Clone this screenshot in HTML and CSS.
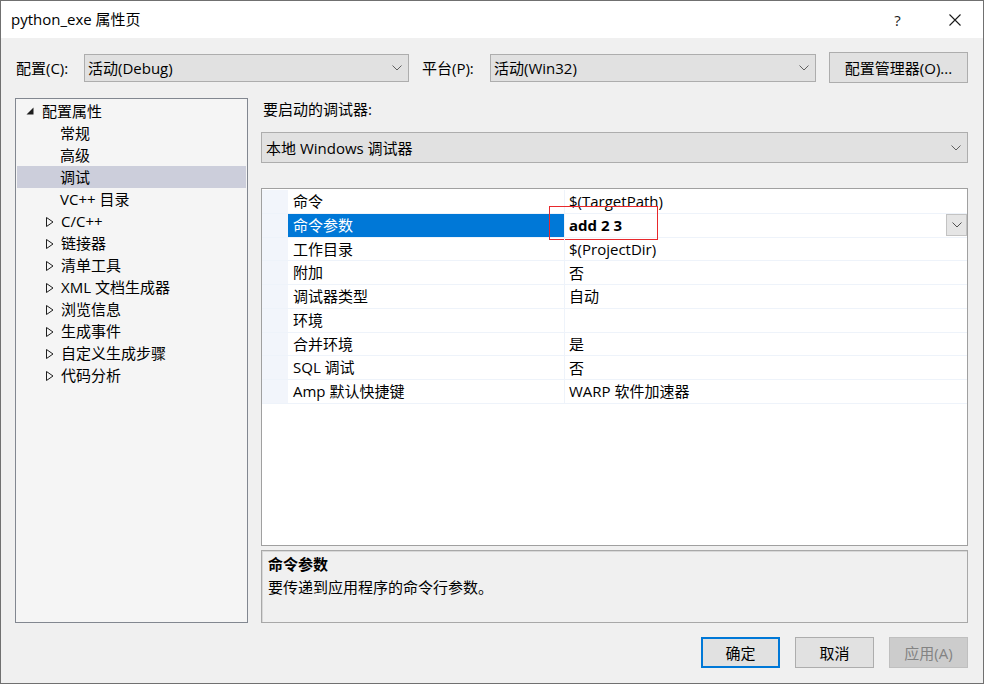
FILE: index.html
```html
<!DOCTYPE html>
<html lang="zh-CN">
<head>
    <meta charset="UTF-8">
    <title>python_exe 属性页</title>
    <link rel="stylesheet" href="styles.css">
</head>
<body>
<div class="dialog">
    <div class="titlebar">
        <span class="title">python_exe 属性页</span>
        <span class="title-btn">?</span>
        <span class="title-btn">
            <svg width="12" height="12" viewBox="0 0 12 12"><path d="M0.5 0.5 L11.5 11.5 M11.5 0.5 L0.5 11.5" stroke="#1a1a1a" stroke-width="1.1" fill="none"/></svg>
        </span>
    </div>

    <div class="content">
        <div class="config-row">
            <span class="label label-config">配置(C):</span>
            <div class="combo combo-config">
                <span>活动(Debug)</span>
                <svg class="chev" width="10" height="6" viewBox="0 0 10 6"><path d="M0.5 0.5 L5 5 L9.5 0.5" stroke="#606060" fill="none"/></svg>
            </div>
            <span class="label label-platform">平台(P):</span>
            <div class="combo combo-platform">
                <span>活动(Win32)</span>
                <svg class="chev" width="10" height="6" viewBox="0 0 10 6"><path d="M0.5 0.5 L5 5 L9.5 0.5" stroke="#606060" fill="none"/></svg>
            </div>
            <div class="btn btn-manager">配置管理器(O)...</div>
        </div>

        <div class="main">
            <div class="tree">
                <div class="tree-item root">
                    <svg class="tri" width="8" height="8" viewBox="0 0 8 8"><path d="M7.5 0.5 L7.5 7.5 L0.5 7.5 Z" fill="#1e1e1e"/></svg>
                    <span>配置属性</span>
                </div>
                <div class="tree-item leaf">常规</div>
                <div class="tree-item leaf">高级</div>
                <div class="tree-item leaf selected">调试</div>
                <div class="tree-item leaf">VC++ 目录</div>
                <div class="tree-item branch"><svg class="tri-open" width="8" height="10" viewBox="0 0 8 10"><path d="M0.5 0.5 L7 5 L0.5 9.5 Z" stroke="#1e1e1e" fill="none"/></svg><span>C/C++</span></div>
                <div class="tree-item branch"><svg class="tri-open" width="8" height="10" viewBox="0 0 8 10"><path d="M0.5 0.5 L7 5 L0.5 9.5 Z" stroke="#1e1e1e" fill="none"/></svg><span>链接器</span></div>
                <div class="tree-item branch"><svg class="tri-open" width="8" height="10" viewBox="0 0 8 10"><path d="M0.5 0.5 L7 5 L0.5 9.5 Z" stroke="#1e1e1e" fill="none"/></svg><span>清单工具</span></div>
                <div class="tree-item branch"><svg class="tri-open" width="8" height="10" viewBox="0 0 8 10"><path d="M0.5 0.5 L7 5 L0.5 9.5 Z" stroke="#1e1e1e" fill="none"/></svg><span>XML 文档生成器</span></div>
                <div class="tree-item branch"><svg class="tri-open" width="8" height="10" viewBox="0 0 8 10"><path d="M0.5 0.5 L7 5 L0.5 9.5 Z" stroke="#1e1e1e" fill="none"/></svg><span>浏览信息</span></div>
                <div class="tree-item branch"><svg class="tri-open" width="8" height="10" viewBox="0 0 8 10"><path d="M0.5 0.5 L7 5 L0.5 9.5 Z" stroke="#1e1e1e" fill="none"/></svg><span>生成事件</span></div>
                <div class="tree-item branch"><svg class="tri-open" width="8" height="10" viewBox="0 0 8 10"><path d="M0.5 0.5 L7 5 L0.5 9.5 Z" stroke="#1e1e1e" fill="none"/></svg><span>自定义生成步骤</span></div>
                <div class="tree-item branch"><svg class="tri-open" width="8" height="10" viewBox="0 0 8 10"><path d="M0.5 0.5 L7 5 L0.5 9.5 Z" stroke="#1e1e1e" fill="none"/></svg><span>代码分析</span></div>
            </div>

            <div class="right">
                <div class="debugger-label">要启动的调试器:</div>
                <div class="combo combo-debugger">
                    <span>本地 Windows 调试器</span>
                    <svg class="chev" width="10" height="6" viewBox="0 0 10 6"><path d="M0.5 0.5 L5 5 L9.5 0.5" stroke="#606060" fill="none"/></svg>
                </div>

                <div class="grid">
                    <div class="prop"><span class="gutter"></span><span class="name">命令</span><span class="value">$(TargetPath)</span></div>
                    <div class="prop active">
                        <span class="gutter"></span><span class="name">命令参数</span>
                        <span class="value bold">add 2 3
                            <span class="drop"><svg width="10" height="6" viewBox="0 0 10 6"><path d="M0.5 0.5 L5 5 L9.5 0.5" stroke="#505050" fill="none"/></svg></span>
                        </span>
                        <span class="mark"></span>
                    </div>
                    <div class="prop"><span class="gutter"></span><span class="name">工作目录</span><span class="value">$(ProjectDir)</span></div>
                    <div class="prop"><span class="gutter"></span><span class="name">附加</span><span class="value">否</span></div>
                    <div class="prop"><span class="gutter"></span><span class="name">调试器类型</span><span class="value">自动</span></div>
                    <div class="prop"><span class="gutter"></span><span class="name">环境</span><span class="value"></span></div>
                    <div class="prop"><span class="gutter"></span><span class="name">合并环境</span><span class="value">是</span></div>
                    <div class="prop"><span class="gutter"></span><span class="name">SQL 调试</span><span class="value">否</span></div>
                    <div class="prop"><span class="gutter"></span><span class="name">Amp 默认快捷键</span><span class="value">WARP 软件加速器</span></div>
                </div>

                <div class="desc">
                    <div class="desc-title">命令参数</div>
                    <div>要传递到应用程序的命令行参数。</div>
                </div>
            </div>
        </div>

        <div class="footer">
            <div class="btn btn-foot btn-ok">确定</div>
            <div class="btn btn-foot">取消</div>
            <div class="btn btn-foot btn-disabled">应用(A)</div>
        </div>
    </div>
</div>
</body>
</html>
```

FILE: styles.css
```css
body {
    margin: 0;
    font-family: "Open Sans", "Noto Sans CJK SC", sans-serif;
    font-size: 15px;
    color: #000;
    background: #f0f0f0;
}
.dialog {
    width: 984px;
    height: 684px;
    box-sizing: border-box;
    border: 1px solid #707070;
    background: #f0f0f0;
    display: flex;
    flex-direction: column;
}
.titlebar {
    height: 37px;
    background: #fff;
    display: flex;
    align-items: center;
    flex-shrink: 0;
}
.title {
    flex: 1;
    padding-left: 10px;
    line-height: 20px;
    margin-top: -1px;
}
.title-btn {
    width: 57px;
    height: 37px;
    display: flex;
    align-items: center;
    justify-content: center;
    font-size: 15px;
    color: #1a1a1a;
}
.content {
    padding: 0 15px 0 14px;
    display: flex;
    flex-direction: column;
}
.config-row {
    margin-top: 14px;
    height: 31px;
    display: flex;
    align-items: center;
}
.label {
    line-height: 22px;
}
.label-config { width: 69px; padding-left: 1px; box-sizing: border-box; }
.label-platform { width: 68px; margin-left: 13px; }
.combo {
    height: 28px;
    box-sizing: border-box;
    background: #e1e1e1;
    border: 1px solid #adadad;
    display: flex;
    align-items: center;
    justify-content: space-between;
    padding: 0 6px 0 3px;
    line-height: 22px;
}
.combo-config { width: 325px; }
.combo-platform { width: 326px; }
.btn {
    box-sizing: border-box;
    background: #e1e1e1;
    border: 1px solid #adadad;
    display: flex;
    align-items: center;
    justify-content: center;
    line-height: 22px;
}
.btn-manager {
    width: 139px;
    height: 31px;
    margin-left: 13px;
}
.main {
    margin-top: 15px;
    height: 525px;
    display: flex;
    gap: 13px;
}
.tree {
    width: 233px;
    box-sizing: border-box;
    border: 1px solid #828790;
    background: #f5f5f5;
    padding: 1px;
}
.tree-item {
    height: 22px;
    line-height: 22px;
    display: flex;
    align-items: center;
    white-space: nowrap;
}
.tree-item.root { padding-left: 9px; }
.tree-item.root .tri { margin-right: 8px; margin-top: -1px; }
.tree-item.leaf { padding-left: 43px; }
.tree-item.branch { padding-left: 29px; }
.tree-item.branch .tri-open { margin-right: 7px; margin-top: 1px; }
.tree-item.selected { background: #cccedb; }
.right {
    width: 707px;
    display: flex;
    flex-direction: column;
}
.debugger-label {
    height: 22px;
    line-height: 22px;
    padding-left: 2px;
    margin-bottom: 12px;
}
.combo-debugger {
    height: 31px;
    padding-left: 4px;
    padding-right: 6px;
}
.grid {
    margin-top: 25px;
    height: 358px;
    box-sizing: border-box;
    border: 1px solid #a0a0a0;
    background: #fff;
    padding-top: 1px;
}
.prop {
    position: relative;
    display: flex;
    height: 23.75px;
    box-sizing: border-box;
    border-bottom: 1px solid #eef3fa;
    line-height: 22px;
}
.gutter {
    width: 26px;
    background: #f2f5fb;
    flex-shrink: 0;
}
.name {
    width: 277px;
    box-sizing: border-box;
    padding-left: 5px;
    border-right: 1px solid #eef3fa;
}
.value {
    flex: 1;
    padding-left: 4px;
    display: flex;
    align-items: center;
    justify-content: space-between;
}
.prop.active .name {
    background: #0078d7;
    color: #fff;
}
.bold { font-weight: bold; }
.drop {
    width: 21px;
    height: 22px;
    box-sizing: border-box;
    background: #e5e5e5;
    border: 1px solid #c3c3c3;
    display: flex;
    align-items: center;
    justify-content: center;
}
.mark {
    position: absolute;
    left: 287px;
    top: -8px;
    width: 109px;
    height: 34px;
    box-sizing: border-box;
    border: 1px solid #e8282c;
}
.desc {
    margin-top: 4px;
    height: 73px;
    box-sizing: border-box;
    border: 1px solid #a8a8a8;
    box-shadow: inset 1px 1px 0 #d8d8d8;
    padding: 2px 6px;
    line-height: 23px;
}
.desc-title { font-weight: bold; }
.footer {
    margin-top: 14px;
    display: flex;
    justify-content: flex-end;
    gap: 15px;
}
.btn-foot {
    width: 79px;
    height: 31px;
}
.btn-ok {
    border: 2px solid #0078d7;
}
.btn-disabled {
    background: #cccccc;
    border-color: #bfbfbf;
    color: #838383;
}
```
